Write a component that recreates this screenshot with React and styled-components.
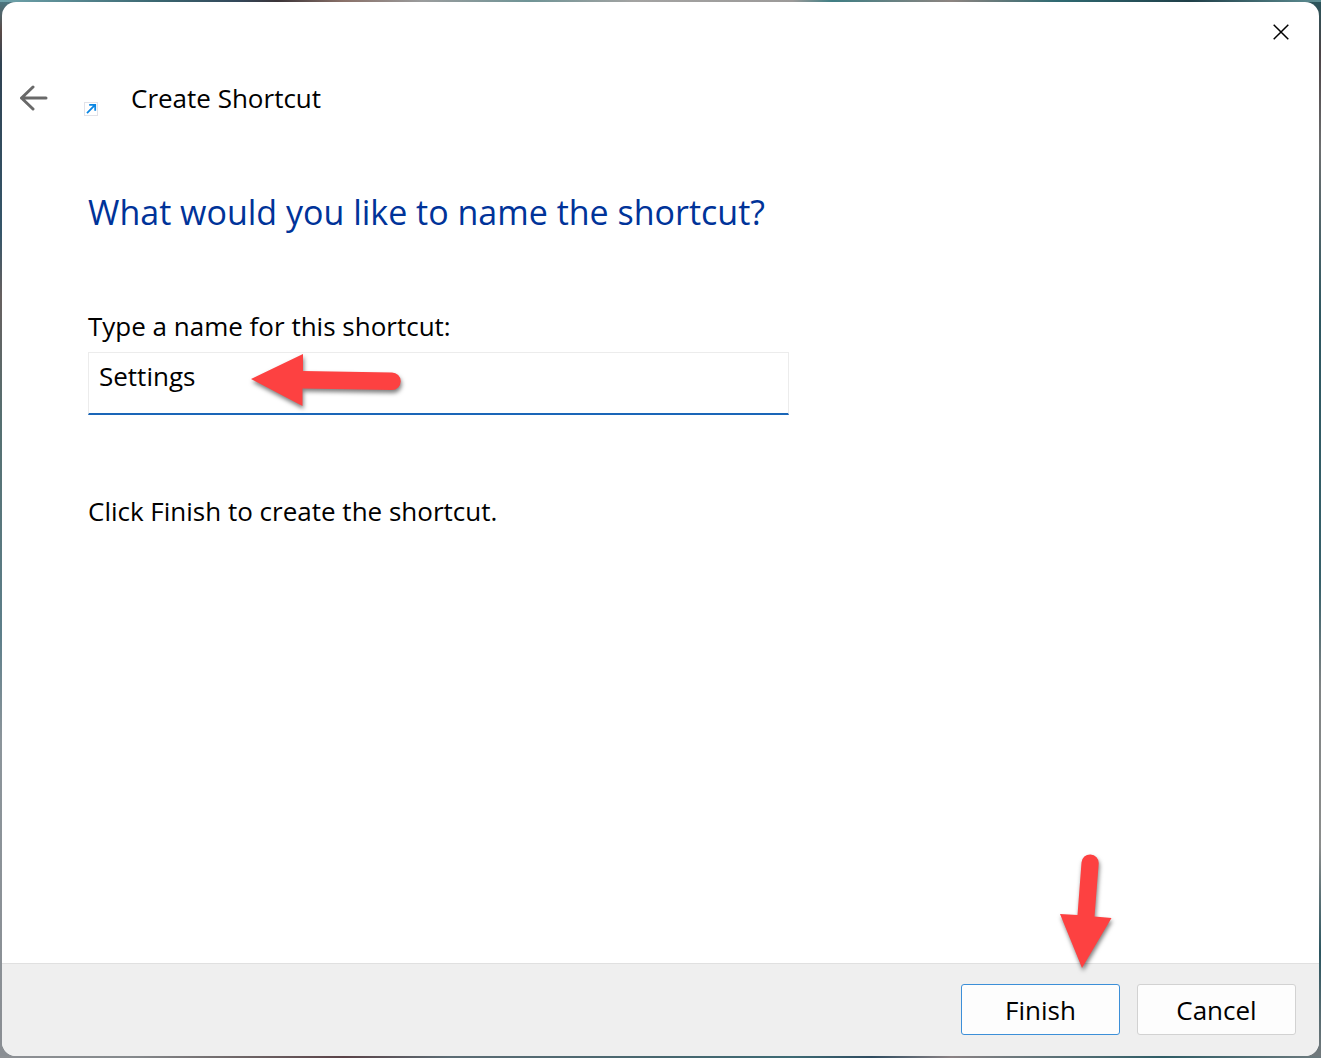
import React, { useState } from "react";
import styled, { createGlobalStyle } from "styled-components";

const GlobalStyle = createGlobalStyle`
  * {
    box-sizing: border-box;
  }
  body {
    margin: 0;
    font-family: "Open Sans", "Noto Sans", sans-serif;
    font-size: 26px;
    line-height: 36px;
    color: #000;
  }
`;

// wallpaper strips: top, bottom, left, right
const Desktop = styled.div`
  display: flex;
  min-height: 100vh;
  padding: 2px;
  background:
    linear-gradient(90deg, #6fa3ab, #3a6670 12%, #33475a 18%, #3b3438 21%, #8a7169 26%, #9a9c9d 32%, #6f9496 40%, #a3a3a2 48%, #9c9a99 60%, #3f7e84 63%, #8d8480 72%, #2f6a72 80%, #1f3f48 90%, #5e8e93) top / 100% 2px no-repeat,
    linear-gradient(90deg, #8d9094, #85898c 10%, #6f6768 18%, #5b4348 26%, #5c6c74 34%, #47666e 50%, #3d6a74 60%, #2f4c60 66%, #8a8284 72%, #66757a 78%, #2f5d66 88%, #6d7a7e) bottom / 100% 2px no-repeat,
    linear-gradient(#4a7883, #5a4a47 3%, #2f4252 6%, #35566a 22%, #67605f 28%, #557071 40%, #5d7f8a 60%, #8c959b 70%, #8a8e93) left / 50% 100% no-repeat,
    linear-gradient(#2b555c, #4b4346 5%, #6d6f70 14%, #2d5660 30%, #36606a 55%, #7f8384 65%, #8b8d8c 80%, #2b5560 90%, #747a7d) right / 50% 100% no-repeat;
`;

const Window = styled.main`
  flex: 1;
  display: flex;
  flex-direction: column;
  overflow: hidden;
  border-radius: 14px;
  background: #fff;
`;

const TitleBar = styled.div`
  display: flex;
  justify-content: flex-end;
  padding: 8px 16px 0;
`;

const IconButton = styled.button`
  display: flex;
  align-items: center;
  justify-content: center;
  width: ${({ $size }) => $size}px;
  height: ${({ $size }) => $size}px;
  padding: 0;
  border: none;
  background: none;
  color: ${({ $color }) => $color};
  cursor: pointer;
`;

const Header = styled.header`
  display: flex;
  align-items: center;
  padding: 26px 16px 0;
`;

const ShortcutIcon = styled.svg`
  align-self: flex-end;
  margin: 0 33px 0 35px;
`;

const HeaderTitle = styled.h1`
  margin: 0;
  font-size: 26px;
  font-weight: 400;
`;

const Content = styled.form`
  flex: 1;
  padding: 72px 86px;
`;

const Heading = styled.h2`
  margin: 0 0 72px;
  font-size: 34px;
  line-height: 48px;
  font-weight: 400;
  color: #003399;
`;

const Label = styled.label`
  display: block;
  margin-bottom: 8px;
`;

const Field = styled.div`
  position: relative;
  max-width: 701px;
  margin-bottom: 78px;
`;

const Input = styled.input`
  display: block;
  width: 100%;
  height: 63px;
  padding: 0 10px 14px;
  border: 1px solid #ececec;
  border-bottom: 2px solid #1a66b8;
  outline: none;
  background: #fff;
  font: inherit;
  color: inherit;
`;

const Hint = styled.p`
  margin: 0;
`;

const Footer = styled.footer`
  display: flex;
  justify-content: flex-end;
  gap: 17px;
  padding: 20px 23px 21px;
  border-top: 1px solid #e0e0e0;
  background: #efefef;
`;

const Action = styled.div`
  position: relative;
`;

const Button = styled.button`
  width: 159px;
  height: 51px;
  padding: 0;
  border: 1px solid ${({ $primary }) => ($primary ? "#3c8fd8" : "#d2d2d2")};
  border-radius: 3px;
  background: #fdfdfd;
  font: inherit;
  color: inherit;
  cursor: pointer;
`;

const Pointer = styled.svg`
  position: absolute;
  overflow: visible;
  pointer-events: none;
  fill: #fd4141;
  filter: drop-shadow(1px 3px 2px rgba(0, 0, 0, 0.5));
`;

// points at the typed name
const FieldPointer = styled(Pointer)`
  left: 163px;
  top: 2px;
`;

// points down at the finish button
const FinishPointer = styled(Pointer)`
  left: 99px;
  bottom: 66px;
`;

const App = () => {
  const [name, setName] = useState("Settings");

  return (
    <>
      <GlobalStyle />
      <Desktop>
        <Window>
          <TitleBar>
            <IconButton type="button" aria-label="Close" $size={44} $color="#000">
              <svg width="16" height="16" viewBox="0 0 16 16" fill="none" stroke="currentColor" strokeWidth="1.5">
                <path d="M.7.7l14.6 14.6M15.3.7L.7 15.3" />
              </svg>
            </IconButton>
          </TitleBar>
          <Header>
            <IconButton type="button" aria-label="Back" $size={31} $color="#696969">
              <svg
                width="29"
                height="26"
                viewBox="0 0 29 26"
                fill="none"
                stroke="currentColor"
                strokeWidth="3"
                strokeLinecap="round"
                strokeLinejoin="round"
              >
                <path d="M14 2L2.500 13L14 24M2.500 13H27" />
              </svg>
            </IconButton>
            <ShortcutIcon width="14" height="14" viewBox="0 0 14 14" fill="none" aria-hidden="true">
              <rect x=".5" y=".5" width="13" height="13" fill="#fff" stroke="#e2e2e8" />
              <path d="M3 11.2l7.800-8M5.200 2.800h6v6" stroke="#0b86e3" strokeWidth="1.8" />
            </ShortcutIcon>
            <HeaderTitle>Create Shortcut</HeaderTitle>
          </Header>
          <Content id="shortcut-form" onSubmit={(e) => e.preventDefault()}>
            <Heading>What would you like to name the shortcut?</Heading>
            <Label htmlFor="name">Type a name for this shortcut:</Label>
            <Field>
              <Input id="name" type="text" value={name} onChange={(e) => setName(e.target.value)} />
              <FieldPointer width="150" height="52" viewBox="0 0 150 52" aria-hidden="true">
                <path d="M0 25L52 0V17L141 18.500A8.700 8.700 0 0 1 141 36L51.500 34.500V52Z" />
              </FieldPointer>
            </Field>
            <Hint>Click Finish to create the shortcut.</Hint>
          </Content>
          <Footer>
            <Action>
              <Button type="submit" form="shortcut-form" $primary>
                Finish
              </Button>
              <FinishPointer width="52" height="115" viewBox="0 0 52 115" aria-hidden="true">
                <path d="M22 114L0 60L17.500 61L21.500 8.500A8.600 8.600 0 0 1 38.700 9.500L34.500 62.500L51.500 64Z" />
              </FinishPointer>
            </Action>
            <Button type="button">Cancel</Button>
          </Footer>
        </Window>
      </Desktop>
    </>
  );
};

export default App;
